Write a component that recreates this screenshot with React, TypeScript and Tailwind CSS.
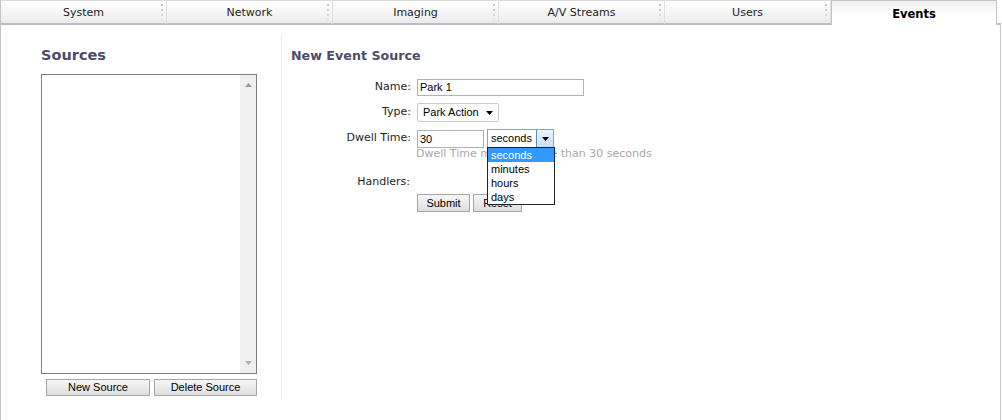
import React from "react";

const Down = ({ color = "#000", w = 7, h = 4 }: { color?: string; w?: number; h?: number }) => (
  <svg width={w} height={h} viewBox={`0 0 ${w} ${h}`}>
    <path d={`M0 0H${w}L${w / 2} ${h}Z`} fill={color} />
  </svg>
);
const Up = ({ color = "#000", w = 7, h = 4 }: { color?: string; w?: number; h?: number }) => (
  <svg width={w} height={h} viewBox={`0 0 ${w} ${h}`}>
    <path d={`M0 ${h}H${w}L${w / 2} 0Z`} fill={color} />
  </svg>
);

const tabs = ["System", "Network", "Imaging", "A/V Streams", "Users"];

function Tab({ label }: { label: string }) {
  return (
    <div className="relative flex h-[25px] w-[166px] items-center justify-center border-t border-r border-b-2 border-t-[#dadada] border-r-[#e0e0e0] border-b-[#b9bdcb] bg-linear-to-b from-white to-[#ececec] pt-[2px] text-[11px] text-[#1e1e1e]">
      {label}
      <div className="absolute right-[3px] top-[3px] flex flex-col gap-[3px]">
        <div className="h-[2px] w-[2px] bg-[#c6c6c6]" />
        <div className="h-[2px] w-[2px] bg-[#cecece]" />
        <div className="h-[2px] w-[2px] bg-[#d9d9d9]" />
        <div className="h-[2px] w-[2px] bg-[#e6e6e6]" />
      </div>
    </div>
  );
}

function Btn({ children, className = "" }: { children: React.ReactNode; className?: string }) {
  return (
    <div
      className={`flex items-center justify-center border border-[#a5a5a5] bg-linear-to-b from-[#f7f7f7] to-[#dedede] font-['Liberation_Sans',Arial,sans-serif] text-[11px] text-black ${className}`}
    >
      {children}
    </div>
  );
}

export default function App() {
  return (
    <div className="h-[420px] w-[1002px] bg-white font-['DejaVu_Sans',Verdana,sans-serif] text-[#1e1e1e]">
      {/* Tab bar */}
      <div className="flex h-[25px] w-[1001px] border-l border-[#c4c4c4]">
        {tabs.map((t) => (
          <Tab key={t} label={t} />
        ))}
        <div className="flex h-[25px] w-[166px] items-center justify-center border-t border-l border-r border-[#c2c4ca] bg-linear-to-b from-[#efefef] to-white to-60% pt-[4px] text-[11.5px] font-bold text-black">
          Events
        </div>
        <div className="h-[25px] w-[4px] border-b-2 border-[#b9bdcb]" />
      </div>

      {/* Content */}
      <div className="flex h-[395px] w-[1001px] border-l border-r border-[#c4c4c4]">
        {/* Left column */}
        <div className="w-[280px] pl-[40px] pt-[21px]">
          <div className="text-[14.5px] font-bold leading-[18px] text-[#4d4c6b]">Sources</div>
          <div className="mt-[10px] flex h-[300px] w-[216px] border border-[#7b7f86]">
            <div className="flex-1 bg-white" />
            <div className="flex w-[16px] flex-col items-center justify-between bg-[#f0f0f0] pt-[8px] pb-[8px]">
              <Up color="#9a9a9a" />
              <Down color="#b0b0b0" />
            </div>
          </div>
          <div className="mt-[5px] flex gap-[4px] pl-[5px]">
            <Btn className="h-[17px] w-[104px]">New Source</Btn>
            <Btn className="h-[17px] w-[103px]">Delete Source</Btn>
          </div>
        </div>

        {/* Right column */}
        <div className="mt-[10px] h-[365px] flex-1 border-l border-[#ececec] pl-[9px] pt-[12px]">
          <div className="text-[12.7px] font-bold leading-[18px] text-[#4d4c6b]">New Event Source</div>

          {/* Name */}
          <div className="mt-[14px] flex h-[17px] items-center">
            <div className="w-[121px] pr-[1px] text-right text-[11px]">Name:</div>
            <div className="ml-[5px] flex h-[17px] w-[167px] items-center border border-[#aeb2b8] pl-[2px] font-['Liberation_Sans',Arial,sans-serif] text-[11px] text-black">
              Park 1
            </div>
          </div>

          {/* Type */}
          <div className="mt-[7px] flex h-[19px] items-center">
            <div className="w-[121px] pr-[1px] text-right text-[11px]">Type:</div>
            <div className="ml-[5px] flex h-[19px] w-[82px] items-center justify-between rounded-[2px] border border-[#cacaca] pl-[5px] pr-[5px] font-['Liberation_Sans',Arial,sans-serif] text-[11px] text-black">
              <span>Park Action</span>
              <Down />
            </div>
          </div>

          {/* Dwell time */}
          <div className="mt-[7px] flex h-[19px] items-start">
            <div className="w-[121px] pr-[1px] text-right text-[11px] leading-[17px]">Dwell Time:</div>
            <div className="ml-[5px] mt-[1px] flex h-[18px] w-[67px] items-center border border-[#aeb2b8] pl-[2px] font-['Liberation_Sans',Arial,sans-serif] text-[11px] text-black">
              30
            </div>
            <div className="relative ml-[3px]">
              <div className="flex h-[19px] w-[67px] border border-[#8aa2c2] font-['Liberation_Sans',Arial,sans-serif] text-[11px] text-black">
                <div className="flex flex-1 items-center pl-[3px]">seconds</div>
                <div className="flex w-[17px] items-center justify-center border-l border-[#5a8cc0] bg-linear-to-b from-[#eaf4fd] to-[#c7e0f6]">
                  <Down />
                </div>
              </div>
              <div className="absolute left-0 top-[18px] z-10 w-[68px] border border-[#222] bg-white font-['Liberation_Sans',Arial,sans-serif] text-[11px] leading-[14px] text-black">
                <div className="bg-[#3399ff] pl-[3px] text-white">seconds</div>
                <div className="pl-[3px]">minutes</div>
                <div className="pl-[3px]">hours</div>
                <div className="pl-[3px]">days</div>
              </div>
            </div>
          </div>

          {/* Hint */}
          <div className="flex">
            <div className="w-[121px]" />
            <div className="ml-[4px] text-[11px] leading-[12px] text-[#a8a8a8]">Dwell Time must be more than 30 seconds</div>
          </div>

          {/* Handlers */}
          <div className="mt-[15px] flex">
            <div className="w-[121px] pr-[2px] text-right text-[11px] leading-[14px]">Handlers:</div>
          </div>

          {/* Buttons */}
          <div className="mt-[5px] flex">
            <div className="w-[121px]" />
            <div className="ml-[5px] flex gap-[3px]">
              <Btn className="h-[18px] w-[53px]">Submit</Btn>
              <Btn className="h-[18px] w-[49px]">Reset</Btn>
            </div>
          </div>
        </div>
      </div>
    </div>
  );
}
